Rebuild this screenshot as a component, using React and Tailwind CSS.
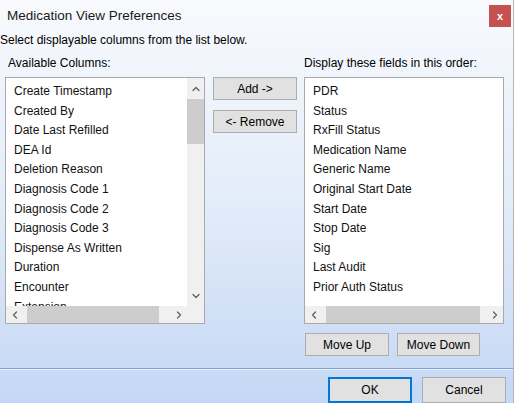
import { ChevronUp, ChevronDown, ChevronLeft, ChevronRight } from "lucide-react";

const available = [
  "Create Timestamp",
  "Created By",
  "Date Last Refilled",
  "DEA Id",
  "Deletion Reason",
  "Diagnosis Code 1",
  "Diagnosis Code 2",
  "Diagnosis Code 3",
  "Dispense As Written",
  "Duration",
  "Encounter",
  "Extension",
];

const displayed = [
  "PDR",
  "Status",
  "RxFill Status",
  "Medication Name",
  "Generic Name",
  "Original Start Date",
  "Start Date",
  "Stop Date",
  "Sig",
  "Last Audit",
  "Prior Auth Status",
];

function WinButton({ children, className = "", primary = false }) {
  return (
    <button
      className={
        "flex items-center justify-center bg-[#e1e1e1] text-[12px] text-black " +
        (primary ? "border-2 border-[#0078d7] " : "border border-[#adadad] ") +
        className
      }
    >
      {children}
    </button>
  );
}

function HScroll({ thumbClass }) {
  return (
    <div className="flex h-[17px] flex-1 items-center bg-[#f0f0f0]">
      <div className="flex w-[17px] justify-center text-[#606060]">
        <ChevronLeft size={12} strokeWidth={2.5} />
      </div>
      <div className="flex h-full flex-1">
        <div className={"h-full bg-[#cdcdcd] " + thumbClass} />
      </div>
      <div className="flex w-[17px] justify-center text-[#606060]">
        <ChevronRight size={12} strokeWidth={2.5} />
      </div>
    </div>
  );
}

function ListItems({ items }) {
  return (
    <div className="pt-[4px]">
      {items.map((item) => (
        <div key={item} className="whitespace-nowrap text-[12px] leading-[19.6px] text-[#111]">
          {item}
        </div>
      ))}
    </div>
  );
}

export default function App() {
  return (
    <div
      className="flex h-[403px] w-[514px] flex-col overflow-hidden border-r border-[#b5b5b5] bg-linear-to-b from-[#f8fafd] via-[#e3ecf9] to-[#c4d7f4]"
      style={{ fontFamily: '"Liberation Sans", Arial, sans-serif' }}
    >
      {/* title bar */}
      <div className="flex items-start justify-between pl-[7px] pr-[2px] pt-[5px]">
        <div className="text-[13.5px] leading-[22px] text-[#1a1a1a]">Medication View Preferences</div>
        <div className="flex h-[22px] w-[22px] items-center justify-center bg-[#c75050] text-[11px] font-bold text-white">
          x
        </div>
      </div>

      <div className="mt-[5px] text-[12px] leading-[16px] text-black">
        Select displayable columns from the list below.
      </div>

      <div className="mt-[8px] flex text-[12px] leading-[14px] text-black">
        <div className="w-[304px] pl-[8px]">Available Columns:</div>
        <div>Display these fields in this order:</div>
      </div>

      {/* lists */}
      <div className="mt-[7px] flex items-start pl-[5px]">
        <div className="flex h-[247px] w-[200px] flex-col border border-[#a9a9a9] bg-white">
          <div className="flex min-h-0 flex-1">
            <div className="flex-1 overflow-hidden pl-[8px]">
              <ListItems items={available} />
            </div>
            <div className="flex w-[17px] flex-col bg-[#f0f0f0]">
              <div className="flex h-[21px] items-center justify-center text-[#606060]">
                <ChevronUp size={12} strokeWidth={2.5} />
              </div>
              <div className="h-[45px] bg-[#cdcdcd]" />
              <div className="flex-1" />
              <div className="flex h-[21px] items-center justify-center text-[#606060]">
                <ChevronDown size={12} strokeWidth={2.5} />
              </div>
            </div>
          </div>
          <div className="flex">
            <HScroll thumbClass="ml-[4px] w-[132px]" />
            <div className="h-[17px] w-[17px] bg-[#f0f0f0]" />
          </div>
        </div>

        <div className="ml-[8px] flex flex-col gap-[10px]">
          <WinButton className="h-[23px] w-[84px]">Add -&gt;</WinButton>
          <WinButton className="h-[23px] w-[84px]">&lt;- Remove</WinButton>
        </div>

        <div className="ml-[7px] flex flex-col">
          <div className="flex h-[247px] w-[200px] flex-col border border-[#a9a9a9] bg-white">
            <div className="min-h-0 flex-1 overflow-hidden pl-[8px]">
              <ListItems items={displayed} />
            </div>
            <div className="flex">
              <HScroll thumbClass="ml-[4px] w-[154px]" />
            </div>
          </div>
          <div className="mt-[9px] flex gap-[8px] pl-[1px]">
            <WinButton className="h-[23px] w-[84px]">Move Up</WinButton>
            <WinButton className="h-[23px] w-[83px]">Move Down</WinButton>
          </div>
        </div>
      </div>

      {/* separator */}
      <div className="mt-[12px] h-[1px] bg-[#7ea5da]" />
      <div className="h-[1px] bg-[#e8effb]" />

      <div className="mt-[8px] flex justify-end gap-[10px] pr-[7px]">
        <WinButton primary className="h-[26px] w-[84px]">OK</WinButton>
        <WinButton className="h-[26px] w-[84px]">Cancel</WinButton>
      </div>
    </div>
  );
}
